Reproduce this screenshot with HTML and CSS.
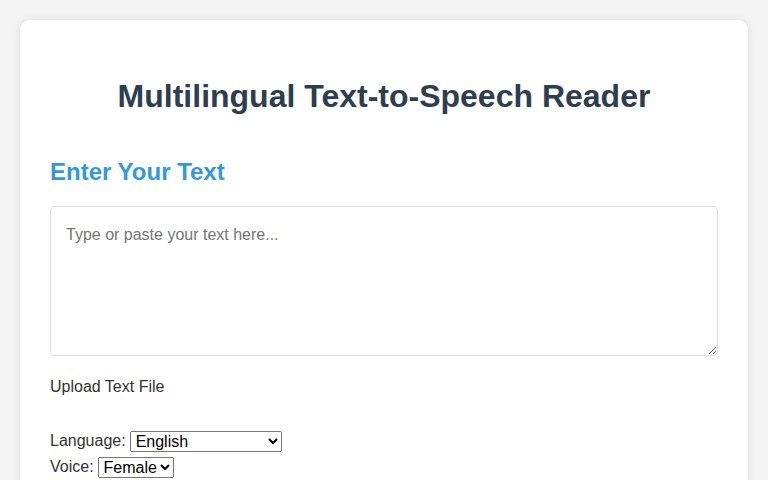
FILE: index.html
```html
<!DOCTYPE html>
<html lang="en">
<head>
<meta charset="utf-8">
<title>Multilingual Text-to-Speech Reader</title>
<link rel="stylesheet" href="styles.css">
</head>
<body>
<main class="card">
  <h1 class="title">Multilingual Text-to-Speech Reader</h1>
  <section class="input-section">
    <h2 class="section-title">Enter Your Text</h2>
    <textarea class="text-input" placeholder="Type or paste your text here..."></textarea>
    <label class="upload-label" for="file-input">Upload Text File</label>
    <input id="file-input" class="file-input" type="file" accept=".txt">
    <div class="controls">
      <div class="control-row">
        <label for="language">Language:</label>
        <select id="language" class="select select-language">
          <option>English</option>
          <option>Spanish</option>
          <option>French</option>
          <option>German</option>
          <option>Chinese (Simplified)</option>
        </select>
      </div>
      <div class="control-row">
        <label for="voice">Voice:</label>
        <select id="voice" class="select select-voice">
          <option>Female</option>
          <option>Male</option>
        </select>
      </div>
    </div>
  </section>
</main>
</body>
</html>
```
FILE: styles.css
```css
html, body {
  margin: 0;
  padding: 0;
}

body {
  background: #f4f4f4;
  font-family: "Liberation Sans", Arial, sans-serif;
  color: #333;
  padding: 20px;
}

.card {
  background: #fff;
  border-radius: 10px;
  box-shadow: 0 0 10px rgba(0, 0, 0, 0.1);
  padding: 58px 30px 30px;
  min-height: 600px;
}

.title {
  margin: 0 0 43px;
  text-align: center;
  font-size: 32px;
  line-height: 37px;
  color: #2c3e50;
}

.section-title {
  margin: 0 0 20px;
  font-size: 24px;
  line-height: 28px;
  color: #3498db;
}

.text-input {
  display: block;
  box-sizing: border-box;
  width: 100%;
  height: 150px;
  padding: 15px;
  border: 1px solid #ddd;
  border-radius: 5px;
  font-family: inherit;
  font-size: 16px;
  line-height: 1.6;
  color: #333;
  resize: vertical;
}

.text-input::placeholder {
  color: #757575;
}

.upload-label {
  display: block;
  margin-top: 22px;
  font-size: 16px;
  line-height: 18px;
}

.file-input {
  display: none;
}

.controls {
  margin-top: 32px;
}

.control-row {
  display: flex;
  align-items: center;
  gap: 4px;
  height: 26px;
  font-size: 16px;
}

.select {
  font-family: inherit;
  font-size: 16px;
  color: #000;
  height: 21px;
  padding: 0 0 0 1px;
}

.select-language {
  width: 152px;
}

.select-voice {
  width: 76px;
}
```
